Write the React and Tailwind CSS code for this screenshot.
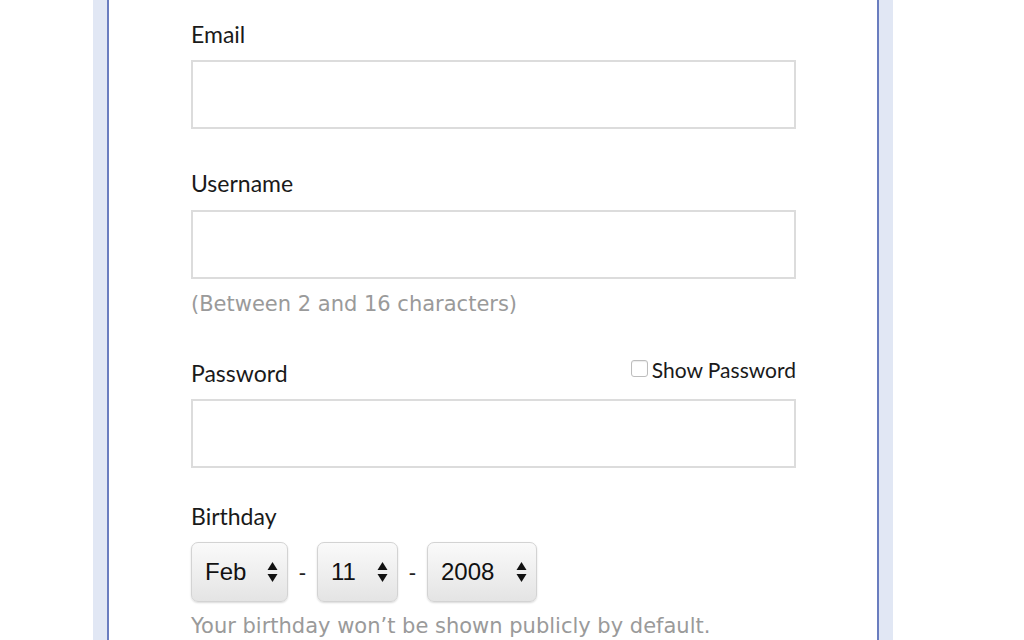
import React from "react";

function Arrows() {
  return (
    <svg width="11" height="22" viewBox="0 0 11 22" className="shrink-0">
      <path d="M5.5 1 L10.5 9 L0.5 9 Z" fill="#111" />
      <path d="M0.5 13 L10.5 13 L5.5 21 Z" fill="#111" />
    </svg>
  );
}

function Select({ value, width }) {
  return (
    <div
      className={`${width} h-[60px] flex items-center justify-between pl-[13px] pr-[9px] rounded-[7px] border border-[#d3d3d3] bg-gradient-to-b from-[#fafafa] to-[#e4e4e4] shadow-[0_1px_2px_rgba(0,0,0,0.15)] text-[24px] text-[#111] [font-family:'Liberation_Sans',Arial,sans-serif]`}
    >
      <span>{value}</span>
      <Arrows />
    </div>
  );
}

export default function App() {
  const label = "text-[23px] leading-[24px] text-[#1a1a1a] [font-family:Lato,'Noto_Sans',sans-serif]";
  const input = "w-full h-[69px] border-2 border-[#dcdcdc] bg-white";
  const help = "text-[21px] leading-[24px] text-[#9a9a9a] [font-family:'DejaVu_Sans',Verdana,sans-serif]";
  return (
    <div className="w-[1024px] h-[640px] bg-white overflow-hidden">
      <div className="ml-[93px] w-[800px] h-full px-[14px] bg-[#e1e7f4]">
        <div className="h-full border-x-2 border-[#6a7dbf] bg-white pl-[82px] pr-[81px] pt-[22px]">
          <div className={label}>Email</div>
          <div className={`${input} mt-[14px]`} />

          <div className={`${label} mt-[42px]`}>Username</div>
          <div className={`${input} mt-[15px]`} />
          <div className={`${help} mt-[13px]`}>(Between 2 and 16 characters)</div>

          <div className="mt-[42px] flex items-end justify-between">
            <div className={label}>Password</div>
            <label className="flex items-center gap-[4px] mb-[3px] text-[21px] leading-[24px] text-[#1a1a1a] [font-family:Lato,'Noto_Sans',sans-serif]">
              <span className="w-[17px] h-[17px] -mt-[4px] rounded-[3px] border border-[#bdbdbd] bg-white shadow-[inset_0_1px_1px_rgba(0,0,0,0.08)]" />
              Show Password
            </label>
          </div>
          <div className={`${input} mt-[14px]`} />

          <div className={`${label} mt-[36px]`}>Birthday</div>
          <div className="mt-[14px] flex items-center">
            <Select value="Feb" width="w-[97px]" />
            <span className="w-[29px] text-center text-[22px] text-[#222] [font-family:'Liberation_Sans',Arial,sans-serif]">-</span>
            <Select value="11" width="w-[81px]" />
            <span className="w-[29px] text-center text-[22px] text-[#222] [font-family:'Liberation_Sans',Arial,sans-serif]">-</span>
            <Select value="2008" width="w-[110px]" />
          </div>
          <div className={`${help} mt-[12px]`}>Your birthday won’t be shown publicly by default.</div>
        </div>
      </div>
    </div>
  );
}
